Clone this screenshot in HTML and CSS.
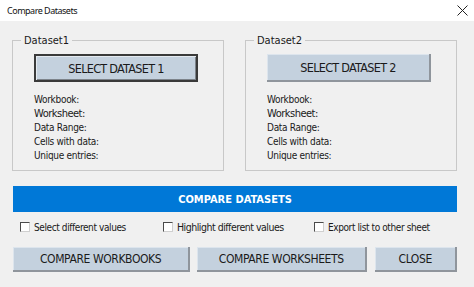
FILE: index.html
```html
<!DOCTYPE html>
<html>
<head>
<meta charset="utf-8">
<title>Compare Datasets</title>
<link rel="stylesheet" href="styles.css">
</head>
<body>
<div class="window">
  <div class="titlebar">
    <span class="title">Compare Datasets</span>
    <svg class="close" width="11" height="11" viewBox="0 0 11 11"><path d="M0.5 0.5L10.5 10.5M10.5 0.5L0.5 10.5" stroke="#222" stroke-width="1" fill="none"/></svg>
  </div>
  <div class="content">
    <div class="groups">
      <fieldset class="group">
        <legend>Dataset1</legend>
        <button class="btn btn-select btn-focus">SELECT DATASET 1</button>
        <div class="info">
          <div class="row">Workbook:</div>
          <div class="row big">Worksheet:</div>
          <div class="row">Data Range:</div>
          <div class="row">Cells with data:</div>
          <div class="row">Unique entries:</div>
        </div>
      </fieldset>
      <fieldset class="group">
        <legend>Dataset2</legend>
        <button class="btn btn-select">SELECT DATASET 2</button>
        <div class="info">
          <div class="row">Workbook:</div>
          <div class="row big">Worksheet:</div>
          <div class="row">Data Range:</div>
          <div class="row">Cells with data:</div>
          <div class="row">Unique entries:</div>
        </div>
      </fieldset>
    </div>
    <button class="compare">COMPARE DATASETS</button>
    <div class="checks">
      <label class="check"><span class="box"></span><span>Select different values</span></label>
      <label class="check big"><span class="box"></span><span>Highlight different values</span></label>
      <label class="check"><span class="box"></span><span>Export list to other sheet</span></label>
    </div>
    <div class="actions">
      <button class="btn btn-wb">COMPARE WORKBOOKS</button>
      <button class="btn btn-ws">COMPARE WORKSHEETS</button>
      <button class="btn btn-close">CLOSE</button>
    </div>
  </div>
</div>
</body>
</html>
```
FILE: styles.css
```css
html, body {
  margin: 0;
  padding: 0;
  background: #f0f0f0;
}
.window {
  width: 474px;
  height: 287px;
  overflow: hidden;
  font-family: "DejaVu Sans Condensed", "Liberation Sans", sans-serif;
  color: #1a1a1a;
}
.titlebar {
  height: 21px;
  background: #ffffff;
  display: flex;
  align-items: center;
  justify-content: space-between;
  padding: 0 6px 0 7px;
}
.title {
  font-family: "Noto Sans", "Open Sans", sans-serif;
  font-size: 9px;
  letter-spacing: -0.5px;
  color: #111;
}
.close {
  display: block;
}
.content {
  height: 266px;
  padding: 0 17px 0 12px;
  background: #f0f0f0;
}
.groups {
  display: flex;
  justify-content: space-between;
  padding-top: 13px;
}
.group {
  width: 212px;
  box-sizing: border-box;
  margin: 0;
  padding: 0 0 7px 21px;
  border: 1px solid #c8c8c8;
  min-width: 0;
}
.group legend {
  font-size: 11px;
  line-height: 13px;
  padding: 0 3px;
  margin-left: -13px;
}
.btn {
  font-family: "DejaVu Sans Condensed", "Liberation Sans", sans-serif;
  background: #c4d1de;
  color: #1a1a1a;
  border: none;
  border-right: 2px solid #8f959c;
  border-bottom: 2px solid #8f959c;
  box-shadow: inset 1px 1px 0 #dde5ed;
  font-size: 12.5px;
  letter-spacing: -0.7px;
  padding: 0;
  margin: 0;
  display: flex;
  align-items: center;
  justify-content: center;
  box-sizing: border-box;
}
.btn-select {
  width: 164px;
  height: 28px;
  margin-top: 7px;
}
.btn-focus {
  border: 2px solid #3a3a3a;
  box-shadow: inset 1px 1px 0 #e4eaf0, inset -1px -1px 0 #7d838a;
}
.info {
  margin-top: 11px;
  font-size: 10px;
  letter-spacing: -0.3px;
}
.row {
  height: 14px;
  line-height: 14px;
}
.row.big {
  font-size: 11px;
  letter-spacing: -0.5px;
}
.compare {
  display: block;
  width: 444px;
  height: 26px;
  margin: 15px 0 0 1px;
  border: none;
  background: #0078d7;
  color: #ffffff;
  font-family: "DejaVu Sans Condensed", "Liberation Sans", sans-serif;
  font-weight: bold;
  font-size: 11px;
  padding: 0;
}
.checks {
  display: grid;
  grid-template-columns: 143px 151px auto;
  height: 22px;
  margin-top: 4px;
  padding-left: 8px;
  align-items: center;
}
.check {
  display: flex;
  align-items: center;
  font-size: 10px;
  letter-spacing: -0.4px;
  gap: 4px;
}
.check.big {
  font-size: 10.5px;
  letter-spacing: -0.5px;
}
.box {
  width: 8px;
  height: 8px;
  border: 1px solid #4a4a4a;
  border-right-color: #cfcfcf;
  border-bottom-color: #cfcfcf;
  background: #ffffff;
  flex: none;
}
.actions {
  display: flex;
  margin: 9px 0 0 1px;
}
.actions .btn {
  height: 25px;
  font-size: 12px;
  letter-spacing: -0.4px;
}
.btn-wb { width: 178px; margin-right: 7px; }
.btn-ws { width: 171px; margin-right: 8px; }
.btn-close { width: 82px; }
```
